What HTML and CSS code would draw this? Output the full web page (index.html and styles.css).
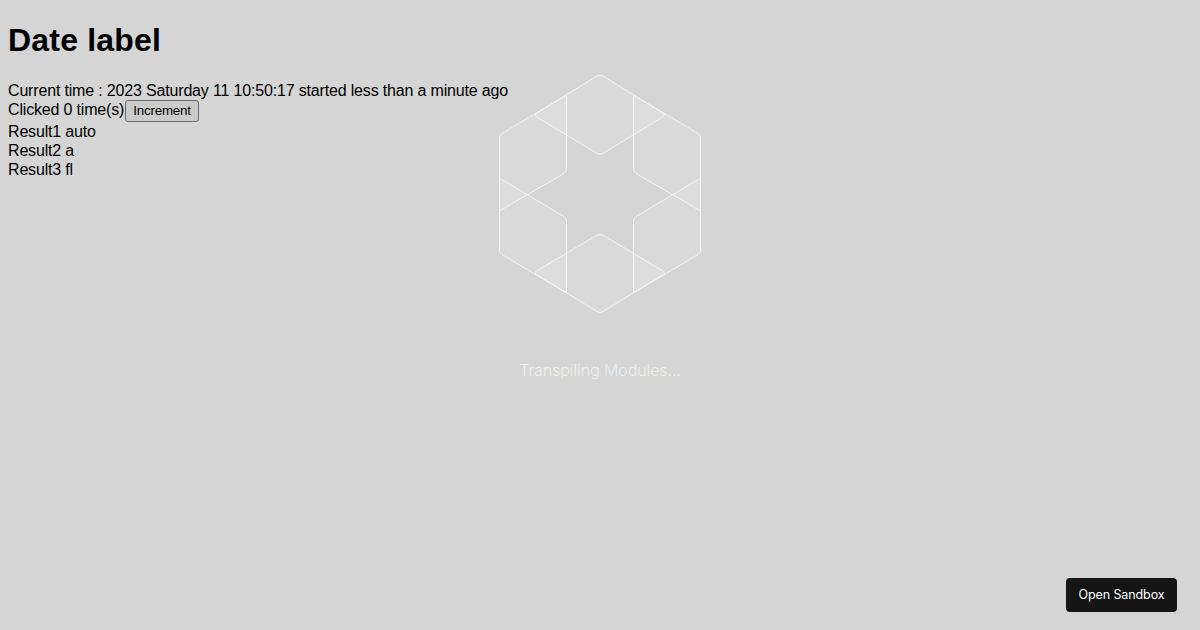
FILE: index.html
```html
<!DOCTYPE html>
<html lang="en">
<head>
    <meta charset="UTF-8">
    <title>Date label</title>
    <link rel="stylesheet" href="styles.css">
</head>
<body>

    <h1>Date label</h1>

    <div class="row">Current time : 2023 Saturday 11 10:50:17 started less than a minute ago</div>
    <div class="row">Clicked 0 time(s)<button class="increment">Increment</button></div>
    <div class="row">Result1 auto</div>
    <div class="row">Result2 a</div>
    <div class="row">Result3 fl</div>

    <!-- Loading overlay -->
    <div class="loader">
        <svg class="cube" width="204" height="244" viewBox="0 0 204 244">
            <defs>
                <path id="face-top" d="M99 4Q102 2.2 105 4L165 41.2Q168 43 165 44.8L105 81.4Q102 83.2 99 81.4L38.5 44.8Q35.5 43 38.5 41.2Z"/>
                <path id="face-upper" d="M66 24.5Q68.5 23 68.5 26L68.5 97Q68.5 100 66 101.5L4 137.5Q1.5 139 1.5 136L1.5 66Q1.5 63 4 61.5Z"/>
                <path id="face-lower" d="M1.5 109Q1.5 106 4 107.5L66 144.5Q68.5 146 68.5 149L68.5 218Q68.5 221 66 219.5L4 182.5Q1.5 181 1.5 178Z"/>
                <path id="face-bottom" d="M99 163.1Q102 161.3 105 163.1L165 199Q168 200.8 165 202.6L105 239.6Q102 241.4 99 239.6L38.5 202.6Q35.5 200.8 38.5 199Z"/>
            </defs>
            <use href="#face-top"/>
            <use href="#face-upper"/>
            <use href="#face-upper" transform="translate(204 0) scale(-1 1)"/>
            <use href="#face-lower"/>
            <use href="#face-lower" transform="translate(204 0) scale(-1 1)"/>
            <use href="#face-bottom"/>
        </svg>
        <div class="loader-text">Transpiling <span class="shimmer">Mo</span>dules...</div>
    </div>

    <a class="open-sandbox" href="#">Open Sandbox</a>

</body>
</html>
```

FILE: styles.css
```css
/* Page content */
html {
    background-color: #d5d5d5;
}

body {
    margin: 0 8px;
    font-family: "Liberation Sans", Arial, sans-serif;
    font-size: 16px;
    color: #000;
}

h1 {
    margin: 22.44px 0 21.44px;
    line-height: 37px;
    letter-spacing: 0.2px;
}

.row {
    line-height: 19px;
    letter-spacing: -0.17px;
}

.increment {
    font-family: "Liberation Sans", Arial, sans-serif;
    font-size: 13.33px;
    line-height: 16px;
    letter-spacing: -0.2px;
    color: #000;
    background-color: #cbcbcb;
    border: 1px solid #6b6b6b;
    border-radius: 3px;
    margin-left: 1px;
    padding: 2px 7px;
}

/* Loading overlay */
.loader {
    position: absolute;
    top: 0;
    left: 0;
    width: 100%;
    height: 630px;
    padding-top: 72px;
    box-sizing: border-box;
    display: flex;
    flex-direction: column;
    align-items: center;
    gap: 45px;
}

.cube use {
    fill: rgba(255, 255, 255, 0.11);
    stroke: #f4f4f4;
    stroke-width: 1;
}

.loader-text {
    font-family: Inter, "Noto Sans", sans-serif;
    font-size: 16px;
    font-weight: 300;
    line-height: 19px;
    letter-spacing: -0.1px;
    color: #f2efe9;
}

.shimmer {
    color: #e2f0f6;
}

/* Open Sandbox button */
.open-sandbox {
    position: absolute;
    right: 23px;
    bottom: 18px;
    width: 111px;
    height: 34px;
    line-height: 34px;
    text-align: center;
    font-family: Inter, "Noto Sans", sans-serif;
    font-size: 12.5px;
    letter-spacing: -0.1px;
    color: #fff;
    text-decoration: none;
    background-color: #151515;
    border-radius: 4px;
}
```
